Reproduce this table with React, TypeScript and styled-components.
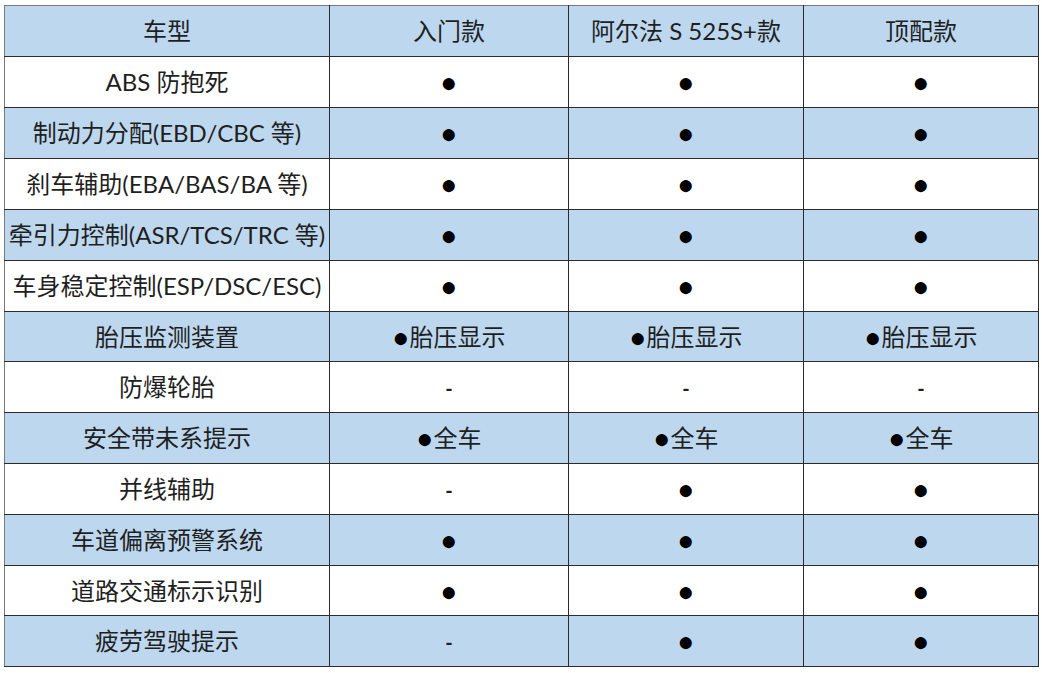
import React from "react";
import styled, { createGlobalStyle } from "styled-components";

const GlobalStyle = createGlobalStyle`
  html, body {
    margin: 0;
    padding: 0;
    background: #ffffff;
  }
  body {
    font-family: Lato, "Noto Sans CJK SC", sans-serif;
  }
`;

const Page = styled.div`
  padding: 5px 4px;
`;

const Table = styled.table`
  border-collapse: collapse;
  table-layout: fixed;
  width: 1035px;
  border-top: 1px solid #7a7a7a;
  border-left: 1px solid #7a7a7a;
`;

const Row = styled.tr<{ $blue: boolean; $h: number }>`
  height: ${(p) => p.$h}px;
  background: ${(p) => (p.$blue ? "#bdd7ee" : "#ffffff")};
`;

const Cell = styled.td`
  border-right: 1px solid #2b2b2b;
  border-bottom: 1px solid #2b2b2b;
  padding: 0;
  text-align: center;
  vertical-align: middle;
  font-size: 24px;
  color: #1f1f1f;
  white-space: nowrap;
  line-height: 1;
`;

const Mark = styled.span`
  font-family: "Liberation Sans", sans-serif;
  font-size: 28px;
  line-height: 0;
  vertical-align: -1px;
  color: #000;
`;

const Dash = styled.span`
  font-family: Lato, sans-serif;
  font-size: 20px;
  font-weight: 700;
`;

type Value = "dot" | "dash" | string;

const header = ["车型", "入门款", "阿尔法 S 525S+款", "顶配款"];

const rows: { name: string; vals: Value[] }[] = [
  { name: "ABS 防抱死", vals: ["dot", "dot", "dot"] },
  { name: "制动力分配(EBD/CBC 等)", vals: ["dot", "dot", "dot"] },
  { name: "刹车辅助(EBA/BAS/BA 等)", vals: ["dot", "dot", "dot"] },
  { name: "牵引力控制(ASR/TCS/TRC 等)", vals: ["dot", "dot", "dot"] },
  { name: "车身稳定控制(ESP/DSC/ESC)", vals: ["dot", "dot", "dot"] },
  { name: "胎压监测装置", vals: ["胎压显示", "胎压显示", "胎压显示"] },
  { name: "防爆轮胎", vals: ["dash", "dash", "dash"] },
  { name: "安全带未系提示", vals: ["全车", "全车", "全车"] },
  { name: "并线辅助", vals: ["dash", "dot", "dot"] },
  { name: "车道偏离预警系统", vals: ["dot", "dot", "dot"] },
  { name: "道路交通标示识别", vals: ["dot", "dot", "dot"] },
  { name: "疲劳驾驶提示", vals: ["dash", "dot", "dot"] },
];

// row heights follow the grid lines of the screenshot
const heights = [51, 51, 51, 51, 51, 51, 50, 51, 51, 51, 51, 50, 51];

const renderValue = (v: Value) => {
  if (v === "dot") return <Mark>●</Mark>;
  if (v === "dash") return <Dash>-</Dash>;
  return (
    <>
      <Mark>●</Mark>
      {v}
    </>
  );
};

const App = () => {
  return (
    <Page>
      <GlobalStyle />
      <Table>
        <colgroup>
          <col style={{ width: 325 }} />
          <col style={{ width: 239 }} />
          <col style={{ width: 235 }} />
          <col style={{ width: 235 }} />
        </colgroup>
        <tbody>
          <Row $blue $h={heights[0]}>
            {header.map((h) => (
              <Cell key={h}>{h}</Cell>
            ))}
          </Row>
          {rows.map((r, i) => (
            <Row key={r.name} $blue={(i + 1) % 2 === 0} $h={heights[i + 1]}>
              <Cell>{r.name}</Cell>
              {r.vals.map((v, j) => (
                <Cell key={j}>{renderValue(v)}</Cell>
              ))}
            </Row>
          ))}
        </tbody>
      </Table>
    </Page>
  );
};

export default App;
